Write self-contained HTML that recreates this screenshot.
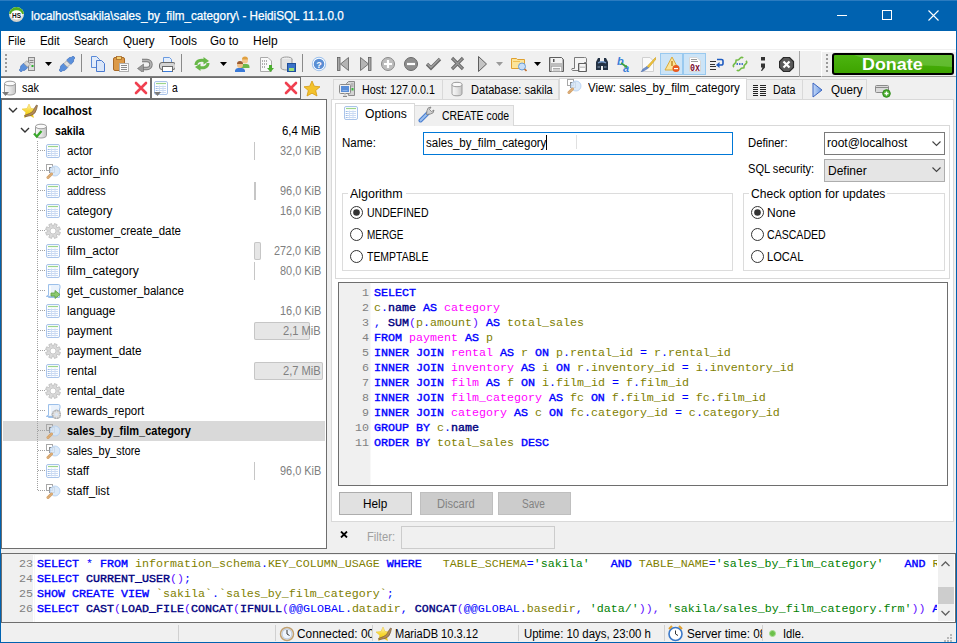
<!DOCTYPE html><html><head><meta charset="utf-8"><style>
*{margin:0;padding:0;box-sizing:border-box}
html,body{width:957px;height:643px;overflow:hidden;background:#f0f0f0}
.a{position:absolute}
.t{position:absolute;font-family:"Liberation Sans",sans-serif;font-size:12px;line-height:15px;white-space:pre;transform-origin:0 0}
.m{position:absolute;font-family:"Liberation Mono",monospace;font-size:11.6667px;line-height:15px;white-space:pre}
.m b{font-weight:normal;-webkit-text-stroke:0.4px currentColor}
</style></head><body>

<div class="a" style="left:0px;top:0px;width:957px;height:31px;background:#0062b0;"></div>
<div class="a" style="left:0px;top:0px;width:957px;height:1px;background:#2a7bc0;"></div>
<div class="a" style="left:0px;top:31px;width:1px;height:612px;background:#0062b0;"></div>
<div class="a" style="left:956px;top:31px;width:1px;height:612px;background:#0062b0;"></div>
<div class="a" style="left:0px;top:642px;width:957px;height:1px;background:#0062b0;"></div>
<div class="t" style="left:31.00px;top:9px;color:#fff;transform:scaleX(0.9751);-webkit-text-stroke:0.25px #fff">localhost\sakila\sales_by_film_category\ - HeidiSQL 11.1.0.0</div>
<div class="a" style="left:837px;top:15px;width:10px;height:1px;background:#fff;"></div>
<div class="a" style="left:882px;top:10px;width:10px;height:10px;box-shadow:inset 0 0 0 1px #fff;"></div>
<svg class="a" style="left:928px;top:10px" width="11" height="11" viewBox="0 0 11 11"><path d="M0.5 0.5L10.5 10.5M10.5 0.5L0.5 10.5" stroke="#fff" stroke-width="1.1"/></svg>
<div class="a" style="left:1px;top:31px;width:955px;height:18px;background:#fff;"></div>
<div class="a" style="left:1px;top:49px;width:955px;height:1px;background:#f0f0f0;"></div>
<div class="a" style="left:1px;top:50px;width:955px;height:1px;background:#fff;"></div>
<div class="t" style="left:8.00px;top:34px;color:#000;transform:scaleX(0.9000);">File</div>
<div class="t" style="left:40.00px;top:34px;color:#000;transform:scaleX(0.9524);">Edit</div>
<div class="t" style="left:74.00px;top:34px;color:#000;transform:scaleX(0.8947);">Search</div>
<div class="t" style="left:123.00px;top:34px;color:#000;transform:scaleX(0.9697);">Query</div>
<div class="t" style="left:169.00px;top:34px;color:#000;">Tools</div>
<div class="t" style="left:210.00px;top:34px;color:#000;transform:scaleX(0.9667);">Go to</div>
<div class="t" style="left:253.00px;top:34px;color:#000;">Help</div>
<div class="a" style="left:1px;top:51px;width:955px;height:26px;background:#f0f0f0;"></div>
<div class="a" style="left:1px;top:76px;width:955px;height:1px;background:#7e7e7e;"></div>
<div class="a" style="left:1px;top:77px;width:300px;height:1px;background:#6e6e6e;"></div>
<svg class="a" style="left:9px;top:7px" width="16" height="16" viewBox="0 0 16 16"><defs><clipPath id="ic"><circle cx="7.5" cy="7.5" r="7.4"/></clipPath><linearGradient id="icg" x1="0" y1="0" x2="0" y2="1"><stop offset="0" stop-color="#ffffff"/><stop offset="1" stop-color="#cfcfc8"/></linearGradient></defs><circle cx="7.5" cy="7.5" r="7.4" fill="url(#icg)"/><rect x="0" y="0" width="15" height="7" fill="#52ad22" clip-path="url(#ic)"/><ellipse cx="7.5" cy="7.8" rx="5.6" ry="4.6" fill="#fff"/><text x="7.5" y="10.6" font-family="Liberation Sans" font-weight="bold" font-size="7.5" text-anchor="middle" fill="#111" textLength="9" lengthAdjust="spacingAndGlyphs">HS</text></svg>
<div class="a" style="left:4px;top:51px;width:796px;height:26px;border-right:1px solid #a8a8a8"></div>
<div class="a" style="left:5px;top:54px;width:2px;height:2px;background:#9a9a9a;"></div>
<div class="a" style="left:5px;top:58px;width:2px;height:2px;background:#9a9a9a;"></div>
<div class="a" style="left:5px;top:62px;width:2px;height:2px;background:#9a9a9a;"></div>
<div class="a" style="left:5px;top:66px;width:2px;height:2px;background:#9a9a9a;"></div>
<div class="a" style="left:5px;top:70px;width:2px;height:2px;background:#9a9a9a;"></div>
<svg class="a" style="left:19px;top:56px" width="16" height="16" viewBox="0 0 16 16"><rect x="9.5" y="1.5" width="6" height="13" fill="#dcdcdc" stroke="#8a8a8a"/><rect x="10.5" y="4" width="4" height="1" fill="#8a8a8a"/><rect x="10.5" y="6" width="4" height="1" fill="#8a8a8a"/><rect x="12.5" y="9" width="2" height="2" fill="#2db02d"/><g transform="rotate(-45 6 10)"><path d="M-1 8.5H1L3 7H7V13H3L1 11.5H-1Z" fill="#5a90dc" stroke="#3a6ab8" stroke-width=".6"/><rect x="7" y="7.5" width="4" height="5" fill="#d8d8d8" stroke="#8a8a8a" stroke-width=".6"/></g></svg>
<svg class="a" style="left:45px;top:62px" width="8" height="5" viewBox="0 0 8 5"><path d="M0 0H7L3.5 4Z" fill="#000"/></svg>
<svg class="a" style="left:59px;top:56px" width="16" height="16" viewBox="0 0 16 16"><g transform="rotate(-45 8 8)"><path d="M-2 6.5H0L2 5H6V11H2L0 9.5H-2Z" fill="#5a90dc" stroke="#3a6ab8" stroke-width=".6"/><rect x="6" y="5.5" width="4" height="5" fill="#e0e0e0" stroke="#8a8a8a" stroke-width=".6"/><path d="M18 6.5H16L14 5H10.5V11H14L16 9.5H18Z" fill="#5a90dc" stroke="#3a6ab8" stroke-width=".6"/></g></svg>
<div class="a" style="left:81px;top:54px;width:1px;height:18px;background:#8a8a8a;"></div>
<svg class="a" style="left:90px;top:56px" width="16" height="16" viewBox="0 0 16 16"><path d="M1.5 0.5H6.5L9.5 3.5V11.5H1.5Z" fill="#e2ecfa" stroke="#5a8ad8"/><path d="M6.5 4.5H11.5L14.5 7.5V15.5H6.5Z" fill="#dae6f8" stroke="#4a7ad0"/></svg>
<svg class="a" style="left:113px;top:56px" width="16" height="16" viewBox="0 0 16 16"><rect x="0.5" y="1.5" width="11" height="13" rx="1.5" fill="#dc9a48" stroke="#a86a28"/><rect x="3.5" y="0.5" width="5" height="3" fill="#f4d070" stroke="#a86a28" stroke-width=".8"/><rect x="6.5" y="7.5" width="9" height="8" fill="#fafafa" stroke="#b0b0b0"/><path d="M8 9.5h6M8 11.5h6M8 13.5h6" stroke="#8a8a8a"/></svg>
<svg class="a" style="left:137px;top:56px" width="16" height="16" viewBox="0 0 16 16"><path d="M5 4.5H10A4 4 0 0 1 10 12.5H6" fill="none" stroke="#7a7a7a" stroke-width="3.4"/><path d="M5 4.5H10A4 4 0 0 1 10 12.5H6" fill="none" stroke="#b4b4b4" stroke-width="1.6"/><path d="M0.5 12.5L6.5 8V17Z" fill="#9a9a9a" stroke="#6a6a6a" stroke-width=".6"/></svg>
<svg class="a" style="left:159px;top:56px" width="16" height="16" viewBox="0 0 16 16"><path d="M4.5 1.5H10.5L12.5 3.5V7.5H4.5Z" fill="#e4eefc" stroke="#6a9ae0"/><rect x="0.5" y="6.5" width="16" height="7" rx="2.5" fill="#d4d4d4" stroke="#6a6a6a"/><rect x="3.5" y="10.5" width="10" height="5" fill="#fff" stroke="#6a6a6a"/><path d="M4 15.5H13" stroke="#3a7ad8"/></svg>
<div class="a" style="left:181px;top:54px;width:1px;height:18px;background:#8a8a8a;"></div>
<svg class="a" style="left:194px;top:56px" width="16" height="16" viewBox="0 0 16 16"><path d="M2 9C2 5 6 3.5 10.5 4.5" fill="none" stroke="#68b848" stroke-width="3"/><path d="M9.5 1L15 5L9.5 8.5Z" fill="#68b848"/><path d="M14 7C14 11 10 12.5 5.5 11.5" fill="none" stroke="#68b848" stroke-width="3"/><path d="M6.5 15L1 11L6.5 7.5Z" fill="#68b848"/></svg>
<svg class="a" style="left:220px;top:62px" width="8" height="5" viewBox="0 0 8 5"><path d="M0 0H7L3.5 4Z" fill="#000"/></svg>
<svg class="a" style="left:234px;top:56px" width="16" height="16" viewBox="0 0 16 16"><circle cx="11" cy="4.5" r="3" fill="#f4c890"/><path d="M8 3.5A3 3 0 0 1 14 3.5Z" fill="#e0a040"/><path d="M6.5 12V10A3 3 0 0 1 9.5 8H12.5A3 3 0 0 1 15.5 11V12Z" fill="#6cb84a"/><circle cx="6" cy="9" r="3" fill="#f0c088"/><path d="M3 8A3 3 0 0 1 9 8Z" fill="#9a5a30"/><path d="M1 16V14.5A3 3 0 0 1 4 12H8A3 3 0 0 1 11 14.5V16Z" fill="#3a7ad8"/></svg>
<svg class="a" style="left:259px;top:56px" width="16" height="16" viewBox="0 0 16 16"><path d="M1.5 1.5H9L12.5 5V15.5H1.5Z" fill="#fafafa" stroke="#aaa"/><path d="M3 5h5M3 8h6M3 11h4" stroke="#666" stroke-dasharray="1 1"/><path d="M10 9V12H8L11.5 16L15 12H13V9Z" fill="#4caf30"/></svg>
<svg class="a" style="left:280px;top:56px" width="16" height="16" viewBox="0 0 16 16"><ellipse cx="6.5" cy="3" rx="5.5" ry="2" fill="#eee" stroke="#999"/><path d="M1 3V12A5.5 2 0 0 0 12 12V3" fill="#e2e2e2" stroke="#999"/><rect x="7.5" y="7.5" width="8" height="8" fill="#3a72c8" stroke="#1f4f98"/><rect x="9" y="12" width="5" height="3" fill="#9de07a"/></svg>
<div class="a" style="left:302px;top:54px;width:1px;height:18px;background:#8a8a8a;"></div>
<svg class="a" style="left:311px;top:56px" width="16" height="16" viewBox="0 0 16 16"><circle cx="8" cy="8" r="7.2" fill="#9cc0ec"/><circle cx="8" cy="8" r="6.2" fill="#fff"/><circle cx="8" cy="8" r="5.3" fill="#5a8ed4"/><text x="8" y="11.5" font-family="Liberation Sans" font-weight="bold" font-size="9" text-anchor="middle" fill="#fff">?</text></svg>
<svg class="a" style="left:336px;top:56px" width="16" height="16" viewBox="0 0 16 16"><rect x="1.5" y="1.5" width="2.5" height="13" fill="#a8a8a8" stroke="#5e5e5e" stroke-width=".8"/><path d="M12.5 1.5V14.5L4.5 8Z" fill="#b4b4b4" stroke="#5e5e5e" stroke-width=".8"/></svg>
<svg class="a" style="left:359px;top:56px" width="16" height="16" viewBox="0 0 16 16"><rect x="9.5" y="1.5" width="2.5" height="13" fill="#a8a8a8" stroke="#5e5e5e" stroke-width=".8"/><path d="M1.5 1.5V14.5L9.5 8Z" fill="#b4b4b4" stroke="#5e5e5e" stroke-width=".8"/></svg>
<svg class="a" style="left:380px;top:56px" width="16" height="16" viewBox="0 0 16 16"><circle cx="8" cy="8" r="6.5" fill="#bdbdbd" stroke="#8a8a8a"/><path d="M8 4V12M4 8H12" stroke="#fff" stroke-width="2.2"/></svg>
<svg class="a" style="left:403px;top:56px" width="16" height="16" viewBox="0 0 16 16"><circle cx="8" cy="8" r="6.5" fill="#8f8f8f" stroke="#6a6a6a"/><path d="M4 8H12" stroke="#fff" stroke-width="2.2"/></svg>
<svg class="a" style="left:426px;top:56px" width="16" height="16" viewBox="0 0 16 16"><path d="M1 8L5 12L14 3" fill="none" stroke="#6a6a6a" stroke-width="3.4"/><path d="M1.5 8L5 11.5L13.5 3" fill="none" stroke="#a0a0a0" stroke-width="1.4"/></svg>
<svg class="a" style="left:450px;top:56px" width="16" height="16" viewBox="0 0 16 16"><path d="M2 2L13 13M13 2L2 13" stroke="#6a6a6a" stroke-width="3.2"/><path d="M2.5 2.5L12.5 12.5M12.5 2.5L2.5 12.5" stroke="#9a9a9a" stroke-width="1.2"/></svg>
<svg class="a" style="left:476px;top:56px" width="16" height="16" viewBox="0 0 16 16"><path d="M2.5 0.5V15.5L10.5 8Z" fill="#c4c4c4" stroke="#5e5e5e" stroke-width="1"/></svg>
<svg class="a" style="left:496px;top:62px" width="8" height="5" viewBox="0 0 8 5"><path d="M0 0H7L3.5 4Z" fill="#9a9a9a"/></svg>
<svg class="a" style="left:511px;top:56px" width="16" height="16" viewBox="0 0 16 16"><path d="M0.5 2.5H5.5L6.5 3.5H13.5V12.5H0.5Z" fill="#fbe49a" stroke="#e0a030"/><path d="M2 5.5H9" stroke="#f0c050"/><circle cx="11" cy="10.5" r="3.5" fill="#c8def8" stroke="#6a9ed8"/><path d="M13.5 13L15.5 15" stroke="#c07030" stroke-width="1.6"/></svg>
<svg class="a" style="left:534px;top:62px" width="8" height="5" viewBox="0 0 8 5"><path d="M0 0H7L3.5 4Z" fill="#000"/></svg>
<svg class="a" style="left:548px;top:56px" width="16" height="16" viewBox="0 0 16 16"><path d="M1.5 1.5H13.5L15.5 3.5V15.5H1.5Z" fill="#bdbdbd" stroke="#5e5e5e"/><rect x="3" y="2" width="11" height="5" fill="#f2f2f2"/><rect x="5" y="3" width="1.5" height="3" fill="#555"/><rect x="3.5" y="10.5" width="10" height="5" fill="#fafafa" stroke="#999" stroke-width=".5"/><path d="M5 12.5H12M5 14H12" stroke="#aaa"/></svg>
<svg class="a" style="left:571px;top:56px" width="16" height="16" viewBox="0 0 16 16"><path d="M3.5 1.5H13.5A1.5 1.5 0 0 1 15.5 3V6.5H13.5V14.5H1.5A1.5 1.5 0 0 1 1 12.5H3.5Z" fill="#f4f4f4" stroke="#7a7a7a"/><path d="M7.5 7.5H15.5V15.5H7.5Z" fill="#c8c8c8" stroke="#5e5e5e"/><rect x="9" y="8" width="5" height="2.5" fill="#f4f4f4"/><rect x="9" y="12" width="5" height="3" fill="#fafafa"/></svg>
<svg class="a" style="left:594px;top:56px" width="16" height="16" viewBox="0 0 16 16"><path d="M2 6L4 2H6V6H10V2H12L14 6V14H9V10H7V14H2Z" fill="#243244"/><path d="M4 7Q8 4.5 12 7" stroke="#7a9ccc" stroke-width="1.3" fill="none"/><path d="M3.5 11H6M10 11H12.5" stroke="#8aa0b8" stroke-width="1"/></svg>
<svg class="a" style="left:617px;top:56px" width="16" height="16" viewBox="0 0 16 16"><text x="0" y="9" font-family="Liberation Sans" font-style="italic" font-weight="bold" font-size="11" fill="#3a7ed8">b</text><text x="6" y="15.5" font-family="Liberation Sans" font-style="italic" font-weight="bold" font-size="11" fill="#3a7ed8">a</text><path d="M4 7L9 10.5" stroke="#3ca03c" stroke-width="1.6"/><path d="M10 9L10 12L7 11Z" fill="#3ca03c"/></svg>
<svg class="a" style="left:640px;top:56px" width="16" height="16" viewBox="0 0 16 16"><path d="M2.5 1.5H10L13.5 5V15.5H2.5Z" fill="#fafafa" stroke="#d0d0d0"/><path d="M15.5 1.5L7 10.5L8.5 12L16 3Z" fill="#f2c53a" stroke="#c89a20" stroke-width=".6"/><path d="M7 10.5L3 13L1 16L4.5 14.5L8.5 12Z" fill="#6f8fc8" stroke="#4a6aa8" stroke-width=".5"/></svg>
<div class="a" style="left:660px;top:53px;width:23px;height:22px;background:#cce4f7;box-shadow:inset 0 0 0 1px #99c9ef;"></div>
<div class="a" style="left:683px;top:53px;width:23px;height:22px;background:#cce4f7;box-shadow:inset 0 0 0 1px #99c9ef;"></div>
<svg class="a" style="left:664px;top:56px" width="16" height="16" viewBox="0 0 16 16"><path d="M8 1L15 14H1Z" fill="#fbe49a" stroke="#d9a93a"/><rect x="7" y="5" width="2" height="5" fill="#d0a040"/><circle cx="12" cy="12.5" r="3.5" fill="#e85a20"/><rect x="10" y="12" width="4" height="1.2" fill="#fff"/></svg>
<svg class="a" style="left:687px;top:56px" width="16" height="16" viewBox="0 0 16 16"><path d="M2.5 1.5H10L13.5 5V15.5H2.5Z" fill="#fff" stroke="#d8d8d8"/><path d="M4 3.5h6M4 5.5h7" stroke="#9a9a9a"/><text x="8" y="14.5" font-family="Liberation Mono" font-weight="bold" font-size="10" text-anchor="middle" fill="#7a0a30" textLength="10" lengthAdjust="spacingAndGlyphs">0x</text></svg>
<svg class="a" style="left:709px;top:56px" width="16" height="16" viewBox="0 0 16 16"><path d="M1 5.5h6M1 8.5h5M1 10.5h6M1 13.5h6" stroke="#333" stroke-width="1"/><path d="M8 3.5H12.5A1.5 1.5 0 0 1 14 5V7.5A1.5 1.5 0 0 1 12.5 9H9" fill="none" stroke="#1f5cc0" stroke-width="1.6"/><path d="M10.5 6L7 9L10.5 12Z" fill="#1f5cc0"/></svg>
<svg class="a" style="left:732px;top:56px" width="16" height="16" viewBox="0 0 16 16"><g transform="rotate(45 8 8)"><path d="M6 1.5Q4 1.5 4 3.5V6L2.5 8L4 10V12.5Q4 14.5 6 14.5M10 1.5Q12 1.5 12 3.5V6L13.5 8L12 10V12.5Q12 14.5 10 14.5" fill="none" stroke="#74bc48" stroke-width="1.6"/></g><path d="M4.5 8H11.5" stroke="#4a78c8" stroke-width="1.8" stroke-dasharray="1.5 1"/></svg>
<svg class="a" style="left:760px;top:56px" width="7" height="16" viewBox="0 0 7 16"><rect x="1" y="1" width="4" height="3.5" fill="#333"/><path d="M1 7.5H5V11.5L2 15H1L2.5 11.5H1Z" fill="#333"/></svg>
<svg class="a" style="left:779px;top:57px" width="16" height="16" viewBox="0 0 16 16"><path d="M4.5 0.5H10.5L14.5 4.5V10.5L10.5 14.5H4.5L0.5 10.5V4.5Z" fill="#5a5a5a" stroke="#2a2a2a" stroke-width="1.2"/><path d="M4.5 4.5L10.5 10.5M10.5 4.5L4.5 10.5" stroke="#fff" stroke-width="2.2"/></svg>
<div class="a" style="left:821px;top:51px;width:135px;height:26px;border-left:1px solid #fff;border-top:1px solid #fff;border-bottom:1px solid #a0a0a0"></div>
<div class="a" style="left:826px;top:54px;width:2px;height:2px;background:#9a9a9a;"></div>
<div class="a" style="left:826px;top:58px;width:2px;height:2px;background:#9a9a9a;"></div>
<div class="a" style="left:826px;top:62px;width:2px;height:2px;background:#9a9a9a;"></div>
<div class="a" style="left:826px;top:66px;width:2px;height:2px;background:#9a9a9a;"></div>
<div class="a" style="left:826px;top:70px;width:2px;height:2px;background:#9a9a9a;"></div>
<div class="a" style="left:832px;top:53px;width:122px;height:22px;background:#000;border-radius:3px"></div>
<div class="a" style="left:834px;top:55px;width:118px;height:18px;background:linear-gradient(180deg,#4cb410 0%,#3ea400 100%);border-radius:1px"></div>
<svg class="a" style="left:834px;top:55px" width="118" height="18" viewBox="0 0 118 18"><path d="M20 0H118V12C80 9 50 12 20 0Z" fill="#7ac850" opacity=".55"/></svg>
<div class="t" style="left:862.00px;top:59px;color:#fff;font-weight:bold;font-size:17px;transform:scaleX(1.0517);top:55px;line-height:20px">Donate</div>
<div class="a" style="left:1px;top:78px;width:150px;height:21px;background:#fff;"></div>
<div class="a" style="left:152px;top:78px;width:148px;height:21px;background:#fff;"></div>
<div class="a" style="left:1px;top:98px;width:300px;height:1px;background:#6e6e6e;"></div>
<div class="a" style="left:150px;top:77px;width:2px;height:22px;background:#6e6e6e;"></div>
<div class="a" style="left:300px;top:77px;width:1px;height:22px;background:#6e6e6e;"></div>
<svg class="a" style="left:2px;top:80px" width="16" height="16" viewBox="0 0 16 16"><defs><linearGradient id="dbg" x1="0" x2="1"><stop offset="0" stop-color="#f8f8f8"/><stop offset=".5" stop-color="#e6e6e6"/><stop offset="1" stop-color="#c4c4c4"/></linearGradient></defs><path d="M2.5 3.5V12.5A5.5 2.5 0 0 0 13.5 12.5V3.5" fill="url(#dbg)" stroke="#9a9a9a"/><ellipse cx="8" cy="3.5" rx="5.5" ry="2.3" fill="#fafafa" stroke="#9a9a9a"/><path d="M0 12H7L3.5 16Z" fill="#7a7a7a"/></svg>
<div class="t" style="left:22.00px;top:81px;color:#000;transform:scaleX(0.9000);">sak</div>
<svg class="a" style="left:134px;top:81px" width="14" height="14" viewBox="0 0 14 14"><path d="M2 2L12 12M12 2L2 12" stroke="#f04050" stroke-width="2.6" stroke-linecap="round"/></svg>
<svg class="a" style="left:153px;top:80px" width="16" height="16" viewBox="0 0 16 16"><rect x="1.5" y="1.5" width="13" height="13" rx="1.5" fill="#fdfeff" stroke="#aac4ea"/><path d="M3 3.5H13" stroke="#9cd48a" stroke-width="1.2"/><path d="M3 6.5H13M3 8.5H13M3 10.5H13M3 12.5H13" stroke="#c4d6f2" stroke-width="0.9"/><path d="M6.5 5.5V13.5M10 5.5V13.5" stroke="#ccdcf4" stroke-width="0.9"/><path d="M3.5 6V13" stroke="#9ebce6" stroke-width="1.6" stroke-dasharray="1 1"/><path d="M1 12H8L4.5 16Z" fill="#7a7a7a"/></svg>
<div class="t" style="left:172.00px;top:81px;color:#000;transform:scaleX(0.8571);">a</div>
<svg class="a" style="left:284px;top:81px" width="14" height="14" viewBox="0 0 14 14"><path d="M2 2L12 12M12 2L2 12" stroke="#f04050" stroke-width="2.6" stroke-linecap="round"/></svg>
<svg class="a" style="left:303px;top:80px" width="18" height="17" viewBox="0 0 18 17"><path d="M9 1L11.3 6.2L17 6.8L12.7 10.5L14 16L9 13.2L4 16L5.3 10.5L1 6.8L6.7 6.2Z" fill="#f3c22c" stroke="#d69a10" stroke-width=".8"/></svg>
<div class="a" style="left:1px;top:99px;width:326px;height:450px;background:#fff;border:1px solid #6e6e6e;border-top:1px solid #6e6e6e"></div>
<div class="a" style="left:3px;top:421px;width:322px;height:20px;background:#d9d9d9;"></div>
<svg class="a" style="left:8px;top:107px" width="10" height="7" viewBox="0 0 10 7"><path d="M1 1L5 5L9 1" fill="none" stroke="#333" stroke-width="1.4"/></svg>
<svg class="a" style="left:20px;top:127px" width="10" height="7" viewBox="0 0 10 7"><path d="M1 1L5 5L9 1" fill="none" stroke="#333" stroke-width="1.4"/></svg>
<svg class="a" style="left:22px;top:103px" width="17" height="16" viewBox="0 0 17 16"><defs><linearGradient id="stg" x1="0" y1="0" x2="0" y2="1"><stop offset="0" stop-color="#fff6c0"/><stop offset=".5" stop-color="#f8d838"/><stop offset="1" stop-color="#f0c800"/></linearGradient></defs><path d="M7 1L9 5.5L14 6L10.2 9.2L11.5 14.5L7 11.8L2.5 14.5L3.8 9.2L0 6L5 5.5Z" fill="url(#stg)" stroke="#e8c020" stroke-width=".5"/><path d="M2.5 12.5L7.5 10.5Q11 9.5 12.5 5L14.5 2L15.5 2.5L14.5 6.5Q13.5 11 9 12.5L3 13.8Z" fill="#b48a58" stroke="#6a5030" stroke-width=".6"/></svg>
<div class="t" style="left:43.00px;top:104px;color:#000;font-weight:bold;transform:scaleX(0.9245);">localhost</div>
<svg class="a" style="left:33px;top:123px" width="16" height="16" viewBox="0 0 16 16"><defs><linearGradient id="dbg" x1="0" x2="1"><stop offset="0" stop-color="#f8f8f8"/><stop offset=".5" stop-color="#e6e6e6"/><stop offset="1" stop-color="#c4c4c4"/></linearGradient></defs><path d="M2.5 3.5V12.5A5.5 2.5 0 0 0 13.5 12.5V3.5" fill="url(#dbg)" stroke="#9a9a9a"/><ellipse cx="8" cy="3.5" rx="5.5" ry="2.3" fill="#fafafa" stroke="#9a9a9a"/><path d="M1 10.5L3.8 13.5L8.5 8" fill="none" stroke="#38a82a" stroke-width="2.2"/></svg>
<div class="t" style="left:55.00px;top:124px;color:#000;font-weight:bold;transform:scaleX(0.8824);">sakila</div>
<div class="t" style="left:282.00px;top:124px;color:#000;transform:scaleX(0.9512);">6,4 MiB</div>
<div class="a" style="left:37px;top:141px;width:1px;height:350px;background:repeating-linear-gradient(180deg,#a0a0a0 0 1px,transparent 1px 2px)"></div>
<div class="a" style="left:38px;top:150px;width:7px;height:1px;background:repeating-linear-gradient(90deg,#a0a0a0 0 1px,transparent 1px 2px)"></div>
<svg class="a" style="left:45px;top:143px" width="16" height="16" viewBox="0 0 16 16"><rect x="1.5" y="1.5" width="13" height="13" rx="1.5" fill="#fdfeff" stroke="#aac4ea"/><path d="M3 3.5H13" stroke="#9cd48a" stroke-width="1.2"/><path d="M3 6.5H13M3 8.5H13M3 10.5H13M3 12.5H13" stroke="#c4d6f2" stroke-width="0.9"/><path d="M6.5 5.5V13.5M10 5.5V13.5" stroke="#ccdcf4" stroke-width="0.9"/><path d="M3.5 6V13" stroke="#9ebce6" stroke-width="1.6" stroke-dasharray="1 1"/></svg>
<div class="a" style="left:254px;top:142px;width:1px;height:18px;background:#c6c6c6;"></div>
<div class="t" style="left:67.00px;top:144px;color:#000;transform:scaleX(0.9630);">actor</div>
<div class="t" style="left:280.00px;top:144px;color:#808080;transform:scaleX(0.9111);">32,0 KiB</div>
<div class="a" style="left:38px;top:170px;width:7px;height:1px;background:repeating-linear-gradient(90deg,#a0a0a0 0 1px,transparent 1px 2px)"></div>
<svg class="a" style="left:45px;top:163px" width="16" height="16" viewBox="0 0 16 16"><rect x="1.5" y="1.5" width="6" height="6" fill="none" stroke="#a8a8a8"/><rect x="4.5" y="4.5" width="5" height="5" fill="none" stroke="#8a8a8a"/><circle cx="10" cy="8" r="5" fill="#d6e6f8" fill-opacity=".85" stroke="#b0cdf0" stroke-width=".8"/><path d="M6.5 11L3 14.5" stroke="#d4a26a" stroke-width="3" stroke-linecap="round"/><path d="M6.5 11L3 14.5" stroke="#f0d0a8" stroke-width="1" stroke-dasharray="1 1"/></svg>
<div class="t" style="left:67.00px;top:164px;color:#000;transform:scaleX(0.9811);">actor_info</div>
<div class="a" style="left:38px;top:190px;width:7px;height:1px;background:repeating-linear-gradient(90deg,#a0a0a0 0 1px,transparent 1px 2px)"></div>
<svg class="a" style="left:45px;top:183px" width="16" height="16" viewBox="0 0 16 16"><rect x="1.5" y="1.5" width="13" height="13" rx="1.5" fill="#fdfeff" stroke="#aac4ea"/><path d="M3 3.5H13" stroke="#9cd48a" stroke-width="1.2"/><path d="M3 6.5H13M3 8.5H13M3 10.5H13M3 12.5H13" stroke="#c4d6f2" stroke-width="0.9"/><path d="M6.5 5.5V13.5M10 5.5V13.5" stroke="#ccdcf4" stroke-width="0.9"/><path d="M3.5 6V13" stroke="#9ebce6" stroke-width="1.6" stroke-dasharray="1 1"/></svg>
<div class="a" style="left:254px;top:182px;width:2px;height:18px;background:#c6c6c6;"></div>
<div class="t" style="left:67.00px;top:184px;color:#000;transform:scaleX(0.9070);">address</div>
<div class="t" style="left:280.00px;top:184px;color:#808080;transform:scaleX(0.9111);">96,0 KiB</div>
<div class="a" style="left:38px;top:210px;width:7px;height:1px;background:repeating-linear-gradient(90deg,#a0a0a0 0 1px,transparent 1px 2px)"></div>
<svg class="a" style="left:45px;top:203px" width="16" height="16" viewBox="0 0 16 16"><rect x="1.5" y="1.5" width="13" height="13" rx="1.5" fill="#fdfeff" stroke="#aac4ea"/><path d="M3 3.5H13" stroke="#9cd48a" stroke-width="1.2"/><path d="M3 6.5H13M3 8.5H13M3 10.5H13M3 12.5H13" stroke="#c4d6f2" stroke-width="0.9"/><path d="M6.5 5.5V13.5M10 5.5V13.5" stroke="#ccdcf4" stroke-width="0.9"/><path d="M3.5 6V13" stroke="#9ebce6" stroke-width="1.6" stroke-dasharray="1 1"/></svg>
<div class="t" style="left:67.00px;top:204px;color:#000;transform:scaleX(0.9891);">category</div>
<div class="t" style="left:280.00px;top:204px;color:#808080;transform:scaleX(0.9111);">16,0 KiB</div>
<div class="a" style="left:38px;top:230px;width:7px;height:1px;background:repeating-linear-gradient(90deg,#a0a0a0 0 1px,transparent 1px 2px)"></div>
<svg class="a" style="left:45px;top:223px" width="16" height="16" viewBox="0 0 16 16"><path d="M15.46 9.46 L14.30 12.25 L11.85 11.19 L11.19 11.85 L12.25 14.30 L9.46 15.46 L8.46 12.98 L7.54 12.98 L6.54 15.46 L3.75 14.30 L4.81 11.85 L4.15 11.19 L1.70 12.25 L0.54 9.46 L3.02 8.46 L3.02 7.54 L0.54 6.54 L1.70 3.75 L4.15 4.81 L4.81 4.15 L3.75 1.70 L6.54 0.54 L7.54 3.02 L8.46 3.02 L9.46 0.54 L12.25 1.70 L11.19 4.15 L11.85 4.81 L14.30 3.75 L15.46 6.54 L12.98 7.54 L12.98 8.46Z" fill="#dadada" stroke="#b4b4b4" stroke-width=".7"/><circle cx="8" cy="8" r="3" fill="#fff" stroke="#b8b8b8" stroke-width=".7"/></svg>
<div class="t" style="left:67.00px;top:224px;color:#000;transform:scaleX(0.9542);">customer_create_date</div>
<div class="a" style="left:38px;top:250px;width:7px;height:1px;background:repeating-linear-gradient(90deg,#a0a0a0 0 1px,transparent 1px 2px)"></div>
<svg class="a" style="left:45px;top:243px" width="16" height="16" viewBox="0 0 16 16"><rect x="1.5" y="1.5" width="13" height="13" rx="1.5" fill="#fdfeff" stroke="#aac4ea"/><path d="M3 3.5H13" stroke="#9cd48a" stroke-width="1.2"/><path d="M3 6.5H13M3 8.5H13M3 10.5H13M3 12.5H13" stroke="#c4d6f2" stroke-width="0.9"/><path d="M6.5 5.5V13.5M10 5.5V13.5" stroke="#ccdcf4" stroke-width="0.9"/><path d="M3.5 6V13" stroke="#9ebce6" stroke-width="1.6" stroke-dasharray="1 1"/></svg>
<div class="a" style="left:254px;top:242px;width:7px;height:18px;background:#e6e6e6;box-shadow:inset 0 0 0 1px #c6c6c6;border-radius:2px"></div>
<div class="t" style="left:67.00px;top:244px;color:#000;">film_actor</div>
<div class="t" style="left:274.00px;top:244px;color:#808080;transform:scaleX(0.9038);">272,0 KiB</div>
<div class="a" style="left:38px;top:270px;width:7px;height:1px;background:repeating-linear-gradient(90deg,#a0a0a0 0 1px,transparent 1px 2px)"></div>
<svg class="a" style="left:45px;top:263px" width="16" height="16" viewBox="0 0 16 16"><rect x="1.5" y="1.5" width="13" height="13" rx="1.5" fill="#fdfeff" stroke="#aac4ea"/><path d="M3 3.5H13" stroke="#9cd48a" stroke-width="1.2"/><path d="M3 6.5H13M3 8.5H13M3 10.5H13M3 12.5H13" stroke="#c4d6f2" stroke-width="0.9"/><path d="M6.5 5.5V13.5M10 5.5V13.5" stroke="#ccdcf4" stroke-width="0.9"/><path d="M3.5 6V13" stroke="#9ebce6" stroke-width="1.6" stroke-dasharray="1 1"/></svg>
<div class="a" style="left:254px;top:262px;width:1px;height:18px;background:#c6c6c6;"></div>
<div class="t" style="left:67.00px;top:264px;color:#000;transform:scaleX(1.0070);">film_category</div>
<div class="t" style="left:280.00px;top:264px;color:#808080;transform:scaleX(0.9111);">80,0 KiB</div>
<div class="a" style="left:38px;top:290px;width:7px;height:1px;background:repeating-linear-gradient(90deg,#a0a0a0 0 1px,transparent 1px 2px)"></div>
<svg class="a" style="left:45px;top:283px" width="16" height="16" viewBox="0 0 16 16"><path d="M3.5 1.5H13.5A1.5 1.5 0 0 1 15 3V5.5H14.5V14.5H3.5V13.5H1.5A1.5 1.5 0 0 1 3.5 12.5Z" fill="#eaf2fc" stroke="#9cc0ea"/><path d="M5 3V12" stroke="#fff" stroke-width="1.5"/><path d="M1.5 13.5H12" stroke="#9cc0ea"/><path d="M6 10H10V7.5L15 11.5L10 15.5V13H6Z" fill="#8cc870" stroke="#5aa040" stroke-width=".8"/></svg>
<div class="t" style="left:67.00px;top:284px;color:#000;transform:scaleX(0.9631);">get_customer_balance</div>
<div class="a" style="left:38px;top:310px;width:7px;height:1px;background:repeating-linear-gradient(90deg,#a0a0a0 0 1px,transparent 1px 2px)"></div>
<svg class="a" style="left:45px;top:303px" width="16" height="16" viewBox="0 0 16 16"><rect x="1.5" y="1.5" width="13" height="13" rx="1.5" fill="#fdfeff" stroke="#aac4ea"/><path d="M3 3.5H13" stroke="#9cd48a" stroke-width="1.2"/><path d="M3 6.5H13M3 8.5H13M3 10.5H13M3 12.5H13" stroke="#c4d6f2" stroke-width="0.9"/><path d="M6.5 5.5V13.5M10 5.5V13.5" stroke="#ccdcf4" stroke-width="0.9"/><path d="M3.5 6V13" stroke="#9ebce6" stroke-width="1.6" stroke-dasharray="1 1"/></svg>
<div class="t" style="left:67.00px;top:304px;color:#000;transform:scaleX(0.9800);">language</div>
<div class="t" style="left:280.00px;top:304px;color:#808080;transform:scaleX(0.9111);">16,0 KiB</div>
<div class="a" style="left:38px;top:330px;width:7px;height:1px;background:repeating-linear-gradient(90deg,#a0a0a0 0 1px,transparent 1px 2px)"></div>
<svg class="a" style="left:45px;top:323px" width="16" height="16" viewBox="0 0 16 16"><rect x="1.5" y="1.5" width="13" height="13" rx="1.5" fill="#fdfeff" stroke="#aac4ea"/><path d="M3 3.5H13" stroke="#9cd48a" stroke-width="1.2"/><path d="M3 6.5H13M3 8.5H13M3 10.5H13M3 12.5H13" stroke="#c4d6f2" stroke-width="0.9"/><path d="M6.5 5.5V13.5M10 5.5V13.5" stroke="#ccdcf4" stroke-width="0.9"/><path d="M3.5 6V13" stroke="#9ebce6" stroke-width="1.6" stroke-dasharray="1 1"/></svg>
<div class="a" style="left:254px;top:322px;width:56px;height:18px;background:#e6e6e6;box-shadow:inset 0 0 0 1px #c6c6c6;border-radius:2px"></div>
<div class="t" style="left:67.00px;top:324px;color:#000;transform:scaleX(0.9787);">payment</div>
<div class="t" style="left:283.00px;top:324px;color:#808080;transform:scaleX(0.9268);">2,1 MiB</div>
<div class="a" style="left:38px;top:350px;width:7px;height:1px;background:repeating-linear-gradient(90deg,#a0a0a0 0 1px,transparent 1px 2px)"></div>
<svg class="a" style="left:45px;top:343px" width="16" height="16" viewBox="0 0 16 16"><path d="M15.46 9.46 L14.30 12.25 L11.85 11.19 L11.19 11.85 L12.25 14.30 L9.46 15.46 L8.46 12.98 L7.54 12.98 L6.54 15.46 L3.75 14.30 L4.81 11.85 L4.15 11.19 L1.70 12.25 L0.54 9.46 L3.02 8.46 L3.02 7.54 L0.54 6.54 L1.70 3.75 L4.15 4.81 L4.81 4.15 L3.75 1.70 L6.54 0.54 L7.54 3.02 L8.46 3.02 L9.46 0.54 L12.25 1.70 L11.19 4.15 L11.85 4.81 L14.30 3.75 L15.46 6.54 L12.98 7.54 L12.98 8.46Z" fill="#dadada" stroke="#b4b4b4" stroke-width=".7"/><circle cx="8" cy="8" r="3" fill="#fff" stroke="#b8b8b8" stroke-width=".7"/></svg>
<div class="t" style="left:67.00px;top:344px;color:#000;transform:scaleX(0.9803);">payment_date</div>
<div class="a" style="left:38px;top:370px;width:7px;height:1px;background:repeating-linear-gradient(90deg,#a0a0a0 0 1px,transparent 1px 2px)"></div>
<svg class="a" style="left:45px;top:363px" width="16" height="16" viewBox="0 0 16 16"><rect x="1.5" y="1.5" width="13" height="13" rx="1.5" fill="#fdfeff" stroke="#aac4ea"/><path d="M3 3.5H13" stroke="#9cd48a" stroke-width="1.2"/><path d="M3 6.5H13M3 8.5H13M3 10.5H13M3 12.5H13" stroke="#c4d6f2" stroke-width="0.9"/><path d="M6.5 5.5V13.5M10 5.5V13.5" stroke="#ccdcf4" stroke-width="0.9"/><path d="M3.5 6V13" stroke="#9ebce6" stroke-width="1.6" stroke-dasharray="1 1"/></svg>
<div class="a" style="left:254px;top:362px;width:69px;height:18px;background:#e6e6e6;box-shadow:inset 0 0 0 1px #c6c6c6;border-radius:2px"></div>
<div class="t" style="left:67.00px;top:364px;color:#000;transform:scaleX(0.9833);">rental</div>
<div class="t" style="left:283.00px;top:364px;color:#808080;transform:scaleX(0.9268);">2,7 MiB</div>
<div class="a" style="left:38px;top:390px;width:7px;height:1px;background:repeating-linear-gradient(90deg,#a0a0a0 0 1px,transparent 1px 2px)"></div>
<svg class="a" style="left:45px;top:383px" width="16" height="16" viewBox="0 0 16 16"><path d="M15.46 9.46 L14.30 12.25 L11.85 11.19 L11.19 11.85 L12.25 14.30 L9.46 15.46 L8.46 12.98 L7.54 12.98 L6.54 15.46 L3.75 14.30 L4.81 11.85 L4.15 11.19 L1.70 12.25 L0.54 9.46 L3.02 8.46 L3.02 7.54 L0.54 6.54 L1.70 3.75 L4.15 4.81 L4.81 4.15 L3.75 1.70 L6.54 0.54 L7.54 3.02 L8.46 3.02 L9.46 0.54 L12.25 1.70 L11.19 4.15 L11.85 4.81 L14.30 3.75 L15.46 6.54 L12.98 7.54 L12.98 8.46Z" fill="#dadada" stroke="#b4b4b4" stroke-width=".7"/><circle cx="8" cy="8" r="3" fill="#fff" stroke="#b8b8b8" stroke-width=".7"/></svg>
<div class="t" style="left:67.00px;top:384px;color:#000;transform:scaleX(0.9583);">rental_date</div>
<div class="a" style="left:38px;top:410px;width:7px;height:1px;background:repeating-linear-gradient(90deg,#a0a0a0 0 1px,transparent 1px 2px)"></div>
<svg class="a" style="left:45px;top:403px" width="16" height="16" viewBox="0 0 16 16"><path d="M3.5 1.5H13.5A1.5 1.5 0 0 1 15 3V5.5H14.5V14.5H3.5V13.5H1.5A1.5 1.5 0 0 1 3.5 12.5Z" fill="#eaf2fc" stroke="#9cc0ea"/><path d="M5 3V12" stroke="#fff" stroke-width="1.5"/><path d="M1.5 13.5H12" stroke="#9cc0ea"/><path d="M15.99 10.50 L15.99 12.50 L14.56 12.72 L14.53 12.80 L15.38 13.96 L13.96 15.38 L12.80 14.53 L12.72 14.56 L12.50 15.99 L10.50 15.99 L10.28 14.56 L10.20 14.53 L9.04 15.38 L7.62 13.96 L8.47 12.80 L8.44 12.72 L7.01 12.50 L7.01 10.50 L8.44 10.28 L8.47 10.20 L7.62 9.04 L9.04 7.62 L10.20 8.47 L10.28 8.44 L10.50 7.01 L12.50 7.01 L12.72 8.44 L12.80 8.47 L13.96 7.62 L15.38 9.04 L14.53 10.20 L14.56 10.28Z" fill="#e0e0e0" stroke="#9a9a9a" stroke-width=".7"/><circle cx="11.5" cy="11.5" r="1.4" fill="#dbe8f8"/></svg>
<div class="t" style="left:67.00px;top:404px;color:#000;transform:scaleX(0.9568);">rewards_report</div>
<div class="a" style="left:38px;top:430px;width:7px;height:1px;background:repeating-linear-gradient(90deg,#a0a0a0 0 1px,transparent 1px 2px)"></div>
<svg class="a" style="left:45px;top:423px" width="16" height="16" viewBox="0 0 16 16"><rect x="1.5" y="1.5" width="6" height="6" fill="none" stroke="#a8a8a8"/><rect x="4.5" y="4.5" width="5" height="5" fill="none" stroke="#8a8a8a"/><circle cx="10" cy="8" r="5" fill="#d6e6f8" fill-opacity=".85" stroke="#b0cdf0" stroke-width=".8"/><path d="M6.5 11L3 14.5" stroke="#d4a26a" stroke-width="3" stroke-linecap="round"/><path d="M6.5 11L3 14.5" stroke="#f0d0a8" stroke-width="1" stroke-dasharray="1 1"/></svg>
<div class="t" style="left:67.00px;top:424px;color:#000;font-weight:bold;transform:scaleX(0.9154);">sales_by_film_category</div>
<div class="a" style="left:38px;top:450px;width:7px;height:1px;background:repeating-linear-gradient(90deg,#a0a0a0 0 1px,transparent 1px 2px)"></div>
<svg class="a" style="left:45px;top:443px" width="16" height="16" viewBox="0 0 16 16"><rect x="1.5" y="1.5" width="6" height="6" fill="none" stroke="#a8a8a8"/><rect x="4.5" y="4.5" width="5" height="5" fill="none" stroke="#8a8a8a"/><circle cx="10" cy="8" r="5" fill="#d6e6f8" fill-opacity=".85" stroke="#b0cdf0" stroke-width=".8"/><path d="M6.5 11L3 14.5" stroke="#d4a26a" stroke-width="3" stroke-linecap="round"/><path d="M6.5 11L3 14.5" stroke="#f0d0a8" stroke-width="1" stroke-dasharray="1 1"/></svg>
<div class="t" style="left:67.00px;top:444px;color:#000;transform:scaleX(0.9099);">sales_by_store</div>
<div class="a" style="left:38px;top:470px;width:7px;height:1px;background:repeating-linear-gradient(90deg,#a0a0a0 0 1px,transparent 1px 2px)"></div>
<svg class="a" style="left:45px;top:463px" width="16" height="16" viewBox="0 0 16 16"><rect x="1.5" y="1.5" width="13" height="13" rx="1.5" fill="#fdfeff" stroke="#aac4ea"/><path d="M3 3.5H13" stroke="#9cd48a" stroke-width="1.2"/><path d="M3 6.5H13M3 8.5H13M3 10.5H13M3 12.5H13" stroke="#c4d6f2" stroke-width="0.9"/><path d="M6.5 5.5V13.5M10 5.5V13.5" stroke="#ccdcf4" stroke-width="0.9"/><path d="M3.5 6V13" stroke="#9ebce6" stroke-width="1.6" stroke-dasharray="1 1"/></svg>
<div class="a" style="left:254px;top:462px;width:1px;height:18px;background:#c6c6c6;"></div>
<div class="t" style="left:67.00px;top:464px;color:#000;transform:scaleX(0.9783);">staff</div>
<div class="t" style="left:280.00px;top:464px;color:#808080;transform:scaleX(0.9111);">96,0 KiB</div>
<div class="a" style="left:38px;top:490px;width:7px;height:1px;background:repeating-linear-gradient(90deg,#a0a0a0 0 1px,transparent 1px 2px)"></div>
<svg class="a" style="left:45px;top:483px" width="16" height="16" viewBox="0 0 16 16"><rect x="1.5" y="1.5" width="6" height="6" fill="none" stroke="#a8a8a8"/><rect x="4.5" y="4.5" width="5" height="5" fill="none" stroke="#8a8a8a"/><circle cx="10" cy="8" r="5" fill="#d6e6f8" fill-opacity=".85" stroke="#b0cdf0" stroke-width=".8"/><path d="M6.5 11L3 14.5" stroke="#d4a26a" stroke-width="3" stroke-linecap="round"/><path d="M6.5 11L3 14.5" stroke="#f0d0a8" stroke-width="1" stroke-dasharray="1 1"/></svg>
<div class="t" style="left:67.00px;top:484px;color:#000;transform:scaleX(0.9682);">staff_list</div>
<div class="a" style="left:331px;top:99px;width:623px;height:423px;background:#fff;border:1px solid #d9d9d9"></div>
<div class="a" style="left:333px;top:79px;width:110px;height:20px;background:#f0f0f0;border:1px solid #d9d9d9;border-bottom:none"></div>
<div class="a" style="left:442px;top:79px;width:117px;height:20px;background:#f0f0f0;border:1px solid #d9d9d9;border-bottom:none"></div>
<div class="a" style="left:746px;top:79px;width:57px;height:20px;background:#f0f0f0;border:1px solid #d9d9d9;border-bottom:none"></div>
<div class="a" style="left:802px;top:79px;width:65px;height:20px;background:#f0f0f0;border:1px solid #d9d9d9;border-bottom:none"></div>
<div class="a" style="left:559px;top:78px;width:188px;height:22px;background:#fff;border:1px solid #d9d9d9;border-bottom:none"></div>
<svg class="a" style="left:339px;top:81px" width="16" height="16" viewBox="0 0 16 16"><path d="M7.5 2.5L9.5 0.5H15.5V14.5H9.5Z" fill="#d4d4d4" stroke="#8a8a8a"/><rect x="12" y="2.5" width="2.5" height="1" fill="#999"/><rect x="12" y="4.5" width="2.5" height="1" fill="#999"/><rect x="12.5" y="7" width="2" height="2.5" fill="#3cb83c"/><rect x="0.5" y="3.5" width="11" height="9" rx="1" fill="#f0f0f0" stroke="#8a8a8a"/><rect x="2" y="5" width="8" height="6" fill="#5a8ed8"/><path d="M3.5 9.5H8.5" stroke="#8ab4ec"/><path d="M4 15.5H8" stroke="#8a8a8a" stroke-width="1.4"/><rect x="5" y="12.5" width="2" height="2" fill="#ccc"/></svg>
<div class="t" style="left:362.00px;top:83px;color:#000;transform:scaleX(0.8963);">Host: 127.0.0.1</div>
<svg class="a" style="left:451px;top:81px" width="12" height="16" viewBox="0 0 12 16"><defs><linearGradient id="dbg2" x1="0" x2="1"><stop offset="0" stop-color="#f8f8f8"/><stop offset=".5" stop-color="#e6e6e6"/><stop offset="1" stop-color="#c4c4c4"/></linearGradient></defs><path d="M1 3.5V12.5A5 2.3 0 0 0 11 12.5V3.5" fill="url(#dbg2)" stroke="#9a9a9a"/><ellipse cx="6" cy="3.5" rx="5" ry="2.2" fill="#fafafa" stroke="#9a9a9a"/></svg>
<div class="t" style="left:471.00px;top:83px;color:#000;transform:scaleX(0.9213);">Database: sakila</div>
<svg class="a" style="left:566px;top:78px" width="16" height="16" viewBox="0 0 16 16"><rect x="1.5" y="1.5" width="6" height="6" fill="none" stroke="#a8a8a8"/><rect x="4.5" y="4.5" width="5" height="5" fill="none" stroke="#8a8a8a"/><circle cx="10" cy="8" r="5" fill="#d6e6f8" fill-opacity=".85" stroke="#b0cdf0" stroke-width=".8"/><path d="M6.5 11L3 14.5" stroke="#d4a26a" stroke-width="3" stroke-linecap="round"/><path d="M6.5 11L3 14.5" stroke="#f0d0a8" stroke-width="1" stroke-dasharray="1 1"/></svg>
<div class="t" style="left:588.00px;top:81px;color:#000;transform:scaleX(0.9620);">View: sales_by_film_category</div>
<svg class="a" style="left:753px;top:84px" width="13" height="13" viewBox="0 0 13 13"><path d="M0 1.5h5M0 3.5h5M0 5.5h5M0 7.5h5M0 9.5h5M0 11.5h5M7 1.5h6M7 3.5h6M7 5.5h6M7 7.5h6M7 9.5h6M7 11.5h6" stroke="#222" stroke-width="1"/></svg>
<div class="t" style="left:773.00px;top:83px;color:#000;transform:scaleX(0.8846);">Data</div>
<svg class="a" style="left:812px;top:82px" width="11" height="16" viewBox="0 0 11 16"><defs><linearGradient id="qg" x1="0" x2="1"><stop offset="0" stop-color="#c4d8f8"/><stop offset="1" stop-color="#6a98e0"/></linearGradient></defs><path d="M1 1V15L10 8Z" fill="url(#qg)" stroke="#3a64c0"/></svg>
<div class="t" style="left:831.00px;top:83px;color:#000;transform:scaleX(0.9697);">Query</div>
<svg class="a" style="left:874px;top:82px" width="18" height="16" viewBox="0 0 18 16"><rect x="1.5" y="3.5" width="13" height="7" rx="1" fill="#dadada" stroke="#8a8a8a"/><path d="M1.5 5.5H14.5" stroke="#8a8a8a"/><circle cx="12.5" cy="11.5" r="3.8" fill="#4cae30" stroke="#2d8a18"/><path d="M12.5 9.5V13.5M10.5 11.5H14.5" stroke="#fff" stroke-width="1.3"/></svg>
<div class="a" style="left:335px;top:125px;width:615px;height:154px;background:#fff;border:1px solid #d9d9d9"></div>
<div class="a" style="left:414px;top:105px;width:100px;height:21px;background:#f0f0f0;border:1px solid #d9d9d9;border-bottom:none"></div>
<div class="a" style="left:335px;top:103px;width:80px;height:23px;background:#fff;border:1px solid #d9d9d9;border-bottom:none"></div>
<svg class="a" style="left:343px;top:105px" width="16" height="16" viewBox="0 0 16 16"><rect x="1.5" y="1.5" width="13" height="13" rx="1.5" fill="#fdfeff" stroke="#aac4ea"/><path d="M3 3.5H13" stroke="#9cd48a" stroke-width="1.2"/><path d="M3 6.5H13M3 8.5H13M3 10.5H13M3 12.5H13" stroke="#c4d6f2" stroke-width="0.9"/><path d="M6.5 5.5V13.5M10 5.5V13.5" stroke="#ccdcf4" stroke-width="0.9"/><path d="M3.5 6V13" stroke="#9ebce6" stroke-width="1.6" stroke-dasharray="1 1"/></svg>
<div class="t" style="left:365.00px;top:107px;color:#000;transform:scaleX(1.0122);">Options</div>
<svg class="a" style="left:418px;top:106px" width="17" height="17" viewBox="0 0 17 17"><path d="M2.5 14.5L10 7" stroke="#4a7ed0" stroke-width="4" stroke-linecap="round"/><path d="M2.5 14.5L10 7" stroke="#9cc0f0" stroke-width="1.8" stroke-linecap="round"/><path d="M8.5 8.5L9 4.5A4 4 0 0 1 13 1L11.5 3.5L13.5 5.5L16 4A4 4 0 0 1 12.5 8Z" fill="#d0d0d0" stroke="#7a7a7a" stroke-width=".8"/></svg>
<div class="t" style="left:442.00px;top:109px;color:#000;transform:scaleX(0.8701);">CREATE code</div>
<div class="t" style="left:342.00px;top:136px;color:#000;transform:scaleX(0.9571);">Name:</div>
<div class="a" style="left:423px;top:132px;width:310px;height:23px;background:#fff;box-shadow:inset 0 0 0 1px #0078d7;"></div>
<div class="t" style="left:426.00px;top:136px;color:#000;transform:scaleX(0.9600);">sales_by_film_category</div>
<div class="a" style="left:546px;top:135px;width:1px;height:15px;background:#000;"></div>
<div class="a" style="left:576px;top:135px;width:1px;height:14px;background:#e0e0e0;"></div>
<div class="t" style="left:748.00px;top:136px;color:#000;transform:scaleX(0.9405);">Definer:</div>
<div class="a" style="left:824px;top:132px;width:121px;height:23px;background:#fff;box-shadow:inset 0 0 0 1px #7a7a7a;"></div>
<div class="t" style="left:827.00px;top:136px;color:#000;">root@localhost</div>
<svg class="a" style="left:932px;top:141px" width="9" height="6" viewBox="0 0 9 6"><path d="M0.5 0.5L4.5 4.5L8.5 0.5" fill="none" stroke="#444" stroke-width="1.1"/></svg>
<div class="t" style="left:748.00px;top:162px;color:#000;transform:scaleX(0.9236);">SQL security:</div>
<div class="a" style="left:824px;top:159px;width:121px;height:23px;background:#e5e5e5;box-shadow:inset 0 0 0 1px #adadad;"></div>
<div class="t" style="left:828.00px;top:164px;color:#000;">Definer</div>
<svg class="a" style="left:932px;top:167px" width="9" height="6" viewBox="0 0 9 6"><path d="M0.5 0.5L4.5 4.5L8.5 0.5" fill="none" stroke="#444" stroke-width="1.1"/></svg>
<div class="a" style="left:342px;top:193px;width:391px;height:78px;border:1px solid #dcdcdc"></div>
<div class="a" style="left:348px;top:186px;width:58px;height:12px;background:#fff;"></div>
<div class="t" style="left:350.00px;top:187px;color:#000;transform:scaleX(1.0392);">Algorithm</div>
<svg class="a" style="left:350px;top:206px" width="13" height="13" viewBox="0 0 13 13"><circle cx="6.5" cy="6.5" r="6" fill="#fff" stroke="#333"/><circle cx="6.5" cy="6.5" r="3.3" fill="#333"/></svg>
<div class="t" style="left:367.00px;top:206px;color:#000;transform:scaleX(0.8786);">UNDEFINED</div>
<svg class="a" style="left:350px;top:228px" width="13" height="13" viewBox="0 0 13 13"><circle cx="6.5" cy="6.5" r="6" fill="#fff" stroke="#333"/></svg>
<div class="t" style="left:367.00px;top:228px;color:#000;transform:scaleX(0.8295);">MERGE</div>
<svg class="a" style="left:350px;top:250px" width="13" height="13" viewBox="0 0 13 13"><circle cx="6.5" cy="6.5" r="6" fill="#fff" stroke="#333"/></svg>
<div class="t" style="left:367.00px;top:250px;color:#000;transform:scaleX(0.8714);">TEMPTABLE</div>
<div class="a" style="left:743px;top:193px;width:202px;height:78px;border:1px solid #dcdcdc"></div>
<div class="a" style="left:749px;top:186px;width:138px;height:12px;background:#fff;"></div>
<div class="t" style="left:751.00px;top:187px;color:#000;transform:scaleX(1.0075);">Check option for updates</div>
<svg class="a" style="left:751px;top:206px" width="13" height="13" viewBox="0 0 13 13"><circle cx="6.5" cy="6.5" r="6" fill="#fff" stroke="#333"/><circle cx="6.5" cy="6.5" r="3.3" fill="#333"/></svg>
<div class="t" style="left:767.00px;top:206px;color:#000;">None</div>
<svg class="a" style="left:751px;top:228px" width="13" height="13" viewBox="0 0 13 13"><circle cx="6.5" cy="6.5" r="6" fill="#fff" stroke="#333"/></svg>
<div class="t" style="left:767.00px;top:228px;color:#000;transform:scaleX(0.8806);">CASCADED</div>
<svg class="a" style="left:751px;top:250px" width="13" height="13" viewBox="0 0 13 13"><circle cx="6.5" cy="6.5" r="6" fill="#fff" stroke="#333"/></svg>
<div class="t" style="left:767.00px;top:250px;color:#000;transform:scaleX(0.9250);">LOCAL</div>
<div class="a" style="left:338px;top:282px;width:610px;height:204px;background:#fff;border:1px solid #6e6e6e"></div>
<div class="a" style="left:339px;top:283px;width:31px;height:202px;background:#f0f0f0;"></div>
<div class="a" style="left:370px;top:283px;width:1px;height:202px;background:#f8f8f8;"></div>
<div class="m" style="left:362px;top:286px;color:#808080">1</div>
<div class="m" style="left:374px;top:286px"><b style="color:#0000ff">SELECT</b></div>
<div class="m" style="left:362px;top:301px;color:#808080">2</div>
<div class="m" style="left:374px;top:301px"><span style="color:#808000">c</span><span style="color:#0000ff">.</span><b style="color:#000080">name</b><span style="color:#808000"> </span><b style="color:#0000ff">AS</b><span style="color:#808000"> </span><span style="color:#ff00ff">category</span></div>
<div class="m" style="left:362px;top:316px;color:#808080">3</div>
<div class="m" style="left:374px;top:316px"><span style="color:#0000ff">,</span><span style="color:#808000"> </span><b style="color:#000080">SUM</b><span style="color:#6010ff">(</span><span style="color:#808000">p</span><span style="color:#0000ff">.</span><span style="color:#808000">amount</span><span style="color:#6010ff">)</span><span style="color:#808000"> </span><b style="color:#0000ff">AS</b><span style="color:#808000"> total_sales</span></div>
<div class="m" style="left:362px;top:331px;color:#808080">4</div>
<div class="m" style="left:374px;top:331px"><b style="color:#0000ff">FROM</b><span style="color:#808000"> </span><span style="color:#ff00ff">payment</span><span style="color:#808000"> </span><b style="color:#0000ff">AS</b><span style="color:#808000"> p</span></div>
<div class="m" style="left:362px;top:346px;color:#808080">5</div>
<div class="m" style="left:374px;top:346px"><b style="color:#0000ff">INNER JOIN</b><span style="color:#808000"> </span><span style="color:#ff00ff">rental</span><span style="color:#808000"> </span><b style="color:#0000ff">AS</b><span style="color:#808000"> r </span><b style="color:#0000ff">ON</b><span style="color:#808000"> p</span><span style="color:#0000ff">.</span><span style="color:#808000">rental_id </span><span style="color:#0000ff">=</span><span style="color:#808000"> r</span><span style="color:#0000ff">.</span><span style="color:#808000">rental_id</span></div>
<div class="m" style="left:362px;top:361px;color:#808080">6</div>
<div class="m" style="left:374px;top:361px"><b style="color:#0000ff">INNER JOIN</b><span style="color:#808000"> </span><span style="color:#ff00ff">inventory</span><span style="color:#808000"> </span><b style="color:#0000ff">AS</b><span style="color:#808000"> i </span><b style="color:#0000ff">ON</b><span style="color:#808000"> r</span><span style="color:#0000ff">.</span><span style="color:#808000">inventory_id </span><span style="color:#0000ff">=</span><span style="color:#808000"> i</span><span style="color:#0000ff">.</span><span style="color:#808000">inventory_id</span></div>
<div class="m" style="left:362px;top:376px;color:#808080">7</div>
<div class="m" style="left:374px;top:376px"><b style="color:#0000ff">INNER JOIN</b><span style="color:#808000"> </span><span style="color:#ff00ff">film</span><span style="color:#808000"> </span><b style="color:#0000ff">AS</b><span style="color:#808000"> f </span><b style="color:#0000ff">ON</b><span style="color:#808000"> i</span><span style="color:#0000ff">.</span><span style="color:#808000">film_id </span><span style="color:#0000ff">=</span><span style="color:#808000"> f</span><span style="color:#0000ff">.</span><span style="color:#808000">film_id</span></div>
<div class="m" style="left:362px;top:391px;color:#808080">8</div>
<div class="m" style="left:374px;top:391px"><b style="color:#0000ff">INNER JOIN</b><span style="color:#808000"> </span><span style="color:#ff00ff">film_category</span><span style="color:#808000"> </span><b style="color:#0000ff">AS</b><span style="color:#808000"> fc </span><b style="color:#0000ff">ON</b><span style="color:#808000"> f</span><span style="color:#0000ff">.</span><span style="color:#808000">film_id </span><span style="color:#0000ff">=</span><span style="color:#808000"> fc</span><span style="color:#0000ff">.</span><span style="color:#808000">film_id</span></div>
<div class="m" style="left:362px;top:406px;color:#808080">9</div>
<div class="m" style="left:374px;top:406px"><b style="color:#0000ff">INNER JOIN</b><span style="color:#808000"> </span><span style="color:#ff00ff">category</span><span style="color:#808000"> </span><b style="color:#0000ff">AS</b><span style="color:#808000"> c </span><b style="color:#0000ff">ON</b><span style="color:#808000"> fc</span><span style="color:#0000ff">.</span><span style="color:#808000">category_id </span><span style="color:#0000ff">=</span><span style="color:#808000"> c</span><span style="color:#0000ff">.</span><span style="color:#808000">category_id</span></div>
<div class="m" style="left:355px;top:421px;color:#808080">10</div>
<div class="m" style="left:374px;top:421px"><b style="color:#0000ff">GROUP BY</b><span style="color:#808000"> c</span><span style="color:#0000ff">.</span><b style="color:#000080">name</b></div>
<div class="m" style="left:355px;top:436px;color:#808080">11</div>
<div class="m" style="left:374px;top:436px"><b style="color:#0000ff">ORDER BY</b><span style="color:#808000"> total_sales </span><b style="color:#0000ff">DESC</b></div>
<div class="a" style="left:339px;top:492px;width:73px;height:23px;background:#e1e1e1;box-shadow:inset 0 0 0 1px #adadad;"></div>
<div class="t" style="left:363.00px;top:497px;color:#000;transform:scaleX(0.9800);">Help</div>
<div class="a" style="left:420px;top:492px;width:73px;height:23px;background:#cccccc;box-shadow:inset 0 0 0 1px #bfbfbf;"></div>
<div class="t" style="left:437.00px;top:497px;color:#838383;transform:scaleX(0.9268);">Discard</div>
<div class="a" style="left:498px;top:492px;width:73px;height:23px;background:#cccccc;box-shadow:inset 0 0 0 1px #bfbfbf;"></div>
<div class="t" style="left:522.00px;top:497px;color:#838383;transform:scaleX(0.8393);">Save</div>
<svg class="a" style="left:340px;top:531px" width="8" height="7" viewBox="0 0 8 7"><path d="M1 0.5L7 6.5M7 0.5L1 6.5" stroke="#000" stroke-width="1.8"/></svg>
<div class="t" style="left:367.00px;top:530px;color:#a0a0a0;transform:scaleX(0.9333);">Filter:</div>
<div class="a" style="left:401px;top:526px;width:154px;height:23px;background:#f0f0f0;box-shadow:inset 0 0 0 1px #cccccc;"></div>
<div class="a" style="left:1px;top:553px;width:955px;height:70px;background:#fff;border:1px solid #6e6e6e"></div>
<div class="a" style="left:2px;top:554px;width:953px;height:1px;background:#f0f0f0;"></div>
<div class="a" style="left:2px;top:555px;width:31px;height:67px;background:#f0f0f0;"></div>
<div class="a" style="left:34px;top:555px;width:1px;height:67px;background:#f7f7f7;"></div>
<div class="a" style="left:35px;top:555px;width:902px;height:67px;overflow:hidden">
<div class="m" style="left:2px;top:2px"><b style="color:#0000ff">SELECT</b><span style="color:#808000"> </span><span style="color:#0000ff">*</span><span style="color:#808000"> </span><b style="color:#0000ff">FROM</b><span style="color:#808000"> information_schema</span><span style="color:#0000ff">.</span><span style="color:#808000">KEY_COLUMN_USAGE </span><b style="color:#0000ff">WHERE</b><span style="color:#808000">   TABLE_SCHEMA</span><span style="color:#0000ff">=</span><span style="color:#008000">'sakila'</span><span style="color:#808000">   </span><b style="color:#0000ff">AND</b><span style="color:#808000"> TABLE_NAME</span><span style="color:#0000ff">=</span><span style="color:#008000">'sales_by_film_category'</span><span style="color:#808000">   </span><b style="color:#0000ff">AND</b><span style="color:#808000"> REFERENCED_TABLE_NAME</span></div>
<div class="m" style="left:2px;top:17px"><b style="color:#0000ff">SELECT</b><span style="color:#808000"> </span><b style="color:#000080">CURRENT_USER</b><span style="color:#6010ff">()</span><span style="color:#0000ff">;</span></div>
<div class="m" style="left:2px;top:32px"><b style="color:#0000ff">SHOW CREATE VIEW</b><span style="color:#808000"> `sakila`</span><span style="color:#0000ff">.</span><span style="color:#808000">`sales_by_film_category`</span><span style="color:#0000ff">;</span></div>
<div class="m" style="left:2px;top:47px"><b style="color:#0000ff">SELECT</b><span style="color:#808000"> </span><b style="color:#000080">CAST</b><span style="color:#6010ff">(</span><b style="color:#000080">LOAD_FILE</b><span style="color:#6010ff">(</span><b style="color:#000080">CONCAT</b><span style="color:#6010ff">(</span><b style="color:#000080">IFNULL</b><span style="color:#6010ff">(</span><span style="color:#0000ff">@@GLOBAL</span><span style="color:#0000ff">.</span><span style="color:#808000">datadir</span><span style="color:#0000ff">,</span><span style="color:#808000"> </span><b style="color:#000080">CONCAT</b><span style="color:#6010ff">(</span><span style="color:#0000ff">@@GLOBAL</span><span style="color:#0000ff">.</span><span style="color:#808000">basedir</span><span style="color:#0000ff">,</span><span style="color:#808000"> </span><span style="color:#008000">'data/'</span><span style="color:#6010ff">)),</span><span style="color:#808000"> </span><span style="color:#008000">'sakila/sales_by_film_category.frm'</span><span style="color:#6010ff">))</span><span style="color:#808000"> </span><b style="color:#0000ff">AS</b><span style="color:#808000"> BINARY</span></div>
</div>
<div class="m" style="left:19px;top:557px;color:#808080">23</div>
<div class="m" style="left:19px;top:572px;color:#808080">24</div>
<div class="m" style="left:19px;top:587px;color:#808080">25</div>
<div class="m" style="left:19px;top:602px;color:#808080">26</div>
<div class="a" style="left:938px;top:555px;width:16px;height:66px;background:#f0f0f0;"></div>
<svg class="a" style="left:941px;top:561px" width="9" height="6" viewBox="0 0 9 6"><path d="M0.5 5L4.5 1L8.5 5" fill="none" stroke="#606060" stroke-width="1.3"/></svg>
<div class="a" style="left:938px;top:587px;width:16px;height:17px;background:#cdcdcd;"></div>
<svg class="a" style="left:941px;top:610px" width="9" height="6" viewBox="0 0 9 6"><path d="M0.5 1L4.5 5L8.5 1" fill="none" stroke="#606060" stroke-width="1.3"/></svg>
<div class="a" style="left:1px;top:623px;width:955px;height:19px;background:#f0f0f0;"></div>
<div class="a" style="left:178px;top:625px;width:1px;height:16px;background:#d0d0d0;"></div>
<div class="a" style="left:275px;top:625px;width:1px;height:16px;background:#d0d0d0;"></div>
<div class="a" style="left:372px;top:625px;width:1px;height:16px;background:#d0d0d0;"></div>
<div class="a" style="left:518px;top:625px;width:1px;height:16px;background:#d0d0d0;"></div>
<div class="a" style="left:664px;top:625px;width:1px;height:16px;background:#d0d0d0;"></div>
<div class="a" style="left:762px;top:625px;width:1px;height:16px;background:#d0d0d0;"></div>
<svg class="a" style="left:279px;top:626px" width="16" height="16" viewBox="0 0 16 16"><circle cx="8" cy="8" r="6.5" fill="#fff" stroke="#c0a070" stroke-width="1.5"/><circle cx="8" cy="8" r="5" fill="#eef4fc" stroke="#8aa0c0" stroke-width=".6"/><path d="M8 4V8L10.5 9.5" stroke="#333" stroke-width="1" fill="none"/></svg>
<div class="a" style="left:290px;top:623px;width:82px;height:19px;overflow:hidden"><div class="t" style="left:7.00px;top:4px;color:#000;transform:scaleX(0.9872);">Connected: 00</div></div>
<div class="a" style="left:297px;top:622px;width:75px;height:20px;overflow:hidden"></div>
<svg class="a" style="left:376px;top:626px" width="17" height="15" viewBox="0 0 17 15"><defs><linearGradient id="stg" x1="0" y1="0" x2="0" y2="1"><stop offset="0" stop-color="#fff6c0"/><stop offset=".5" stop-color="#f8d838"/><stop offset="1" stop-color="#f0c800"/></linearGradient></defs><path d="M7 1L9 5.5L14 6L10.2 9.2L11.5 14.5L7 11.8L2.5 14.5L3.8 9.2L0 6L5 5.5Z" fill="url(#stg)" stroke="#e8c020" stroke-width=".5"/><path d="M2.5 12.5L7.5 10.5Q11 9.5 12.5 5L14.5 2L15.5 2.5L14.5 6.5Q13.5 11 9 12.5L3 13.8Z" fill="#b48a58" stroke="#6a5030" stroke-width=".6"/></svg>
<div class="t" style="left:394.50px;top:627px;color:#000;transform:scaleX(0.9222);">MariaDB 10.3.12</div>
<div class="t" style="left:523.50px;top:627px;color:#000;transform:scaleX(0.9511);">Uptime: 10 days, 23:00 h</div>
<svg class="a" style="left:667px;top:625px" width="17" height="17" viewBox="0 0 17 17"><circle cx="8.5" cy="9" r="6.5" fill="#fff" stroke="#3a78c8" stroke-width="1.6"/><path d="M2 4L5 1M15 4L12 1" stroke="#e0a030" stroke-width="2"/><path d="M8.5 5.5V9L11 10.5" stroke="#333" stroke-width="1" fill="none"/></svg>
<div class="a" style="left:680px;top:623px;width:82px;height:19px;overflow:hidden"><div class="t" style="left:6.50px;top:4px;color:#000;transform:scaleX(0.9756);">Server time: 08</div></div>
<svg class="a" style="left:768px;top:629px" width="9" height="9" viewBox="0 0 9 9"><circle cx="4.5" cy="4.5" r="3" fill="#6cc04a" stroke="#a8dc90" stroke-width="1"/></svg>
<div class="t" style="left:783.00px;top:627px;color:#000;transform:scaleX(0.9348);">Idle.</div>
<div class="a" style="left:950px;top:634px;width:2px;height:2px;background:#b8b8b8;"></div>
<div class="a" style="left:947px;top:637px;width:2px;height:2px;background:#b8b8b8;"></div>
<div class="a" style="left:950px;top:637px;width:2px;height:2px;background:#b8b8b8;"></div>
<div class="a" style="left:944px;top:640px;width:2px;height:2px;background:#b8b8b8;"></div>
<div class="a" style="left:947px;top:640px;width:2px;height:2px;background:#b8b8b8;"></div>
<div class="a" style="left:950px;top:640px;width:2px;height:2px;background:#b8b8b8;"></div>
</body></html>
